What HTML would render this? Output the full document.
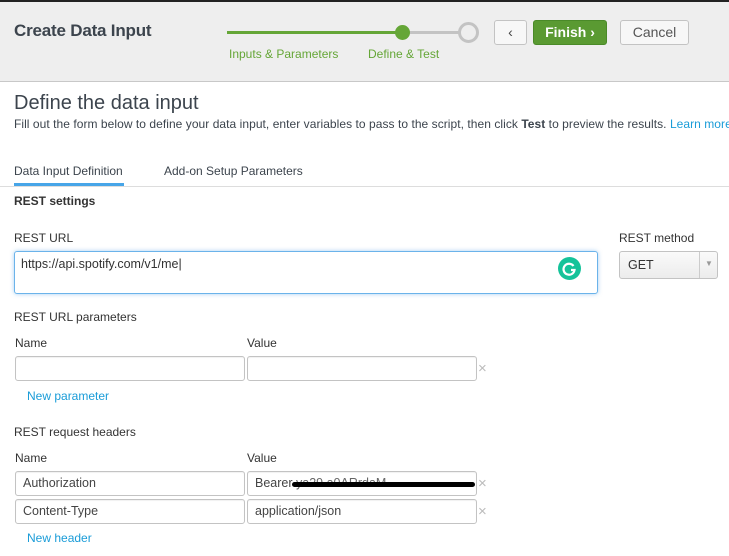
<!DOCTYPE html>
<html><head><meta charset="utf-8"><style>
*{box-sizing:border-box;margin:0;padding:0}
body{width:729px;height:556px;overflow:hidden;background:#fff;font-family:"Liberation Sans",sans-serif;color:#333;position:relative;font-size:12px}
.a{position:absolute;white-space:nowrap}
.hdr{position:absolute;left:0;top:0;width:729px;height:82px;background:#eee;border-top:2px solid #222;border-bottom:1px solid #c8c8c8}
.btn{position:absolute;top:20px;height:25px;border:1px solid #c3c3c3;border-radius:3px;background:#f7f7f7;font-size:14px;color:#444;text-align:center;line-height:23px}
.in{position:absolute;height:25px;border:1px solid #c3c3c3;border-radius:3px;background:#fff;font-size:12.5px;color:#444;line-height:23px;padding-left:7px;box-shadow:inset 0 1px 1px rgba(0,0,0,.06)}
.x{position:absolute;color:#bbb;font-size:15px}
.lnk{color:#1a9cd8}
</style></head><body>
<div class="hdr"></div>
<div class="a" style="left:14px;top:21px;font-size:17px;font-weight:bold;color:#3c444d;letter-spacing:-0.2px">Create Data Input</div>
<div class="a" style="left:227px;top:31px;width:175px;height:3px;background:#65a637"></div>
<div class="a" style="left:402px;top:31px;width:58px;height:3px;background:#c3c3c3"></div>
<div class="a" style="left:395px;top:25px;width:15px;height:15px;border-radius:50%;background:#65a637"></div>
<div class="a" style="left:458px;top:22px;width:21px;height:21px;border-radius:50%;border:3px solid #c3c3c3;background:#eee"></div>
<div class="a" style="left:229px;top:47px;font-size:12px;color:#65a637">Inputs &amp; Parameters</div>
<div class="a" style="left:368px;top:47px;font-size:12px;color:#65a637">Define &amp; Test</div>
<div class="btn" style="left:494px;width:33px">&#8249;</div>
<div class="btn" style="left:533px;width:74px;background:#5a9a32;border-color:#4a8a28;color:#fff;font-weight:bold">Finish &#8250;</div>
<div class="btn" style="left:620px;width:69px;color:#555">Cancel</div>
<div class="a" style="left:14px;top:92px;font-size:20px;color:#3c444d">Define the data input</div>
<div class="a" style="left:14px;top:117px;font-size:12px;letter-spacing:0.05px;color:#3c444d">Fill out the form below to define your data input, enter variables to pass to the script, then click <b>Test</b> to preview the results. <span class="lnk">Learn more</span></div>
<div class="a" style="left:14px;top:164px;font-size:12px;color:#3c444d">Data Input Definition</div>
<div class="a" style="left:164px;top:164px;font-size:12px;color:#3c444d">Add-on Setup Parameters</div>
<div class="a" style="left:0;top:186px;width:729px;height:1px;background:#ddd"></div>
<div class="a" style="left:14px;top:183px;width:110px;height:3px;background:#47a5e8"></div>
<div class="a" style="left:14px;top:194px;font-size:12px;font-weight:bold;color:#333">REST settings</div>
<div class="a" style="left:14px;top:231px;font-size:12px">REST URL</div>
<div class="a" style="left:619px;top:231px;font-size:12px">REST method</div>
<div class="a" style="left:14px;top:251px;width:584px;height:43px;border:1px solid #6bb3ea;border-radius:3px;box-shadow:0 0 4px rgba(80,160,230,.5);padding:5px 6px;font-size:12.5px;color:#333">https://api.spotify.com/v1/me|</div>
<div class="a" style="left:558px;top:257px;width:23px;height:23px;border-radius:50%;background:#15c39a"></div>
<svg class="a" style="left:558px;top:257px" width="23" height="23"><path d="M15.5 9 A5.5 5.5 0 1 0 16.5 13 L13 13" fill="none" stroke="#fff" stroke-width="2.2"/></svg>
<div class="a" style="left:619px;top:251px;width:99px;height:28px;border:1px solid #c3c3c3;border-radius:3px;background:linear-gradient(#fafafa,#ececec);font-size:12.5px;line-height:26px;padding-left:8px">GET</div>
<div class="a" style="left:699px;top:252px;width:1px;height:26px;background:#ccc"></div>
<div class="a" style="left:705px;top:259px;font-size:8px;color:#999">&#9660;</div>
<div class="a" style="left:14px;top:310px;font-size:12px">REST URL parameters</div>
<div class="a" style="left:15px;top:336px;font-size:12px">Name</div>
<div class="a" style="left:247px;top:336px;font-size:12px">Value</div>
<div class="in" style="left:15px;top:356px;width:230px"></div>
<div class="in" style="left:247px;top:356px;width:230px"></div>
<div class="x" style="left:478px;top:360px">×</div>
<div class="a lnk" style="left:27px;top:389px;font-size:12px">New parameter</div>
<div class="a" style="left:14px;top:425px;font-size:12px">REST request headers</div>
<div class="a" style="left:15px;top:451px;font-size:12px">Name</div>
<div class="a" style="left:247px;top:451px;font-size:12px">Value</div>
<div class="in" style="left:15px;top:471px;width:230px">Authorization</div>
<div class="in" style="left:247px;top:471px;width:230px">Bearer <span style="color:#666">ya29.a0ARrdaM</span></div>
<div class="a" style="left:292px;top:482px;width:183px;height:5px;background:#000;border-radius:3px"></div>
<div class="x" style="left:478px;top:475px">×</div>
<div class="in" style="left:15px;top:499px;width:230px">Content-Type</div>
<div class="in" style="left:247px;top:499px;width:230px">application/json</div>
<div class="x" style="left:478px;top:503px">×</div>
<div class="a lnk" style="left:27px;top:531px;font-size:12px">New header</div>
</body></html>
